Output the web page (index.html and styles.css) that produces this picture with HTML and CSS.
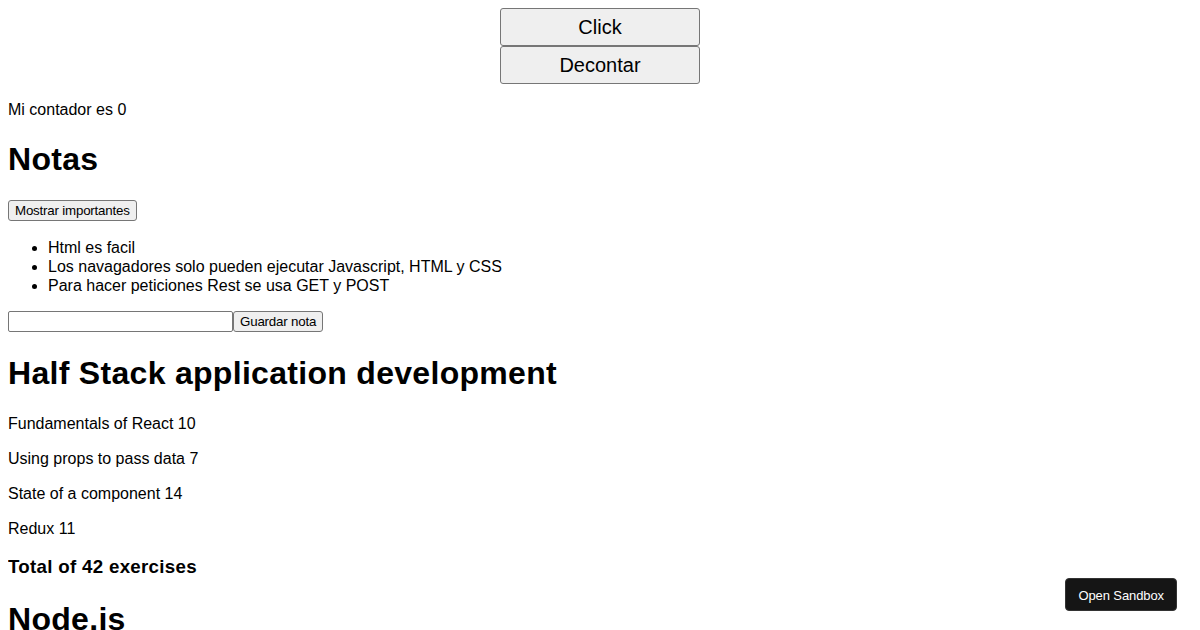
FILE: index.html
```html
<!DOCTYPE html>
<html lang="es">
<head>
<meta charset="utf-8">
<title>App</title>
<link rel="stylesheet" href="styles.css">
</head>
<body>
<div class="app">
  <div class="counter">
    <button class="big-btn">Click</button>
    <button class="big-btn">Decontar</button>
  </div>
  <p>Mi contador es 0</p>
  <h1>Notas</h1>
  <div><button class="small-btn">Mostrar importantes</button></div>
  <ul>
    <li>Html es facil</li>
    <li>Los navagadores solo pueden ejecutar Javascript, HTML y CSS</li>
    <li>Para hacer peticiones Rest se usa GET y POST</li>
  </ul>
  <form class="note-form"><input class="note-input" type="text"><button class="small-btn" type="button">Guardar nota</button></form>
  <h1 class="course-title">Half Stack application development</h1>
  <p>Fundamentals of React 10</p>
  <p>Using props to pass data 7</p>
  <p>State of a component 14</p>
  <p>Redux 11</p>
  <h3>Total of 42 exercises</h3>
  <h1>Node.js</h1>
  <p>Routing 3</p>
</div>
<a class="sandbox-btn">Open Sandbox</a>
</body>
</html>
```

FILE: styles.css
```css
html, body {
  font-family: "Liberation Sans", Arial, sans-serif;
  color: #000;
  background: #fff;
  line-height: 1.19;
}
body {
  margin: 8px;
  overflow: hidden;
}
h1, h3 {
  letter-spacing: 0.3px;
}
.counter {
  display: flex;
  flex-direction: column;
  align-items: center;
}
.big-btn {
  width: 200px;
  height: 38px;
  font-family: "Liberation Sans", Arial, sans-serif;
  font-size: 20px;
  background: #efefef;
  border: 1px solid #767676;
  border-radius: 3px;
  color: #000;
  padding: 0;
}
.small-btn {
  font-family: "Liberation Sans", Arial, sans-serif;
  font-size: 13.333px;
  letter-spacing: -0.2px;
  background: #efefef;
  border: 1px solid #767676;
  border-radius: 3px;
  color: #000;
  padding: 0 6px;
  height: 21px;
  box-sizing: border-box;
}
.note-input {
  font-family: "Liberation Sans", Arial, sans-serif;
  font-size: 13.333px;
  border: 1px solid #767676;
  border-radius: 2px;
  padding: 1px 2px;
  width: 225px;
  height: 21px;
  box-sizing: border-box;
  margin: 0;
}
.note-form {
  display: flex;
  align-items: stretch;
  margin-top: 16px;
}
ul {
  margin-top: 17px;
  margin-bottom: 16px;
}
.course-title {
  margin-bottom: 22px;
}
.sandbox-btn {
  position: fixed;
  right: 23px;
  bottom: 19px;
  background: #151515;
  color: #fff;
  font-family: "Liberation Sans", Arial, sans-serif;
  font-size: 13px;
  letter-spacing: -0.1px;
  padding: 0 12px;
  height: 33px;
  line-height: 33px;
  border-radius: 4px;
  border: 1px solid #333;
  box-sizing: border-box;
}
```
